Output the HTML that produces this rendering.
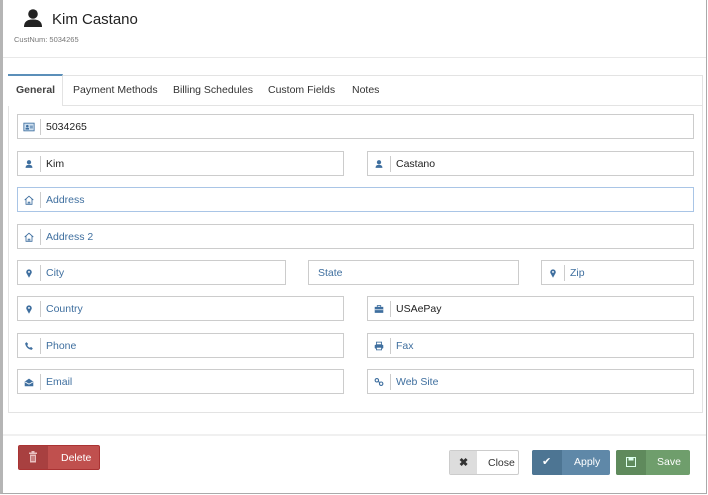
<!DOCTYPE html>
<html><head><style>
*{box-sizing:border-box}
body{margin:0;width:708px;height:495px;background:#fff;font-family:"Liberation Sans",sans-serif;position:relative;overflow:hidden}
.modal{position:absolute;left:0;top:0;width:707px;height:494px;border:1px solid #aaa;border-left:3px solid #b5b5b5;border-top:none;background:#fff}
.title{position:absolute;left:49px;top:11px;font-size:15px;color:#222}
.sub{position:absolute;left:11px;top:35px;font-size:7.5px;color:#777}
.hline{position:absolute;left:0;right:0;top:57px;border-top:1px solid #e8e8e8}
.panel{position:absolute;left:5px;top:75px;width:695px;height:338px;border:1px solid #e3e3e3}
.tabs{position:absolute;left:5px;top:75px;width:695px;height:31px;border-bottom:1px solid #e3e3e3;font-size:10.5px;color:#333}
.tab{position:absolute;top:9px}
.gen{position:absolute;left:0;top:-1px;width:55px;height:32px;background:#fff;border-top:2px solid #5b8fb9;border-right:1px solid #e3e3e3;font-weight:bold;color:#444;padding:8px 0 0 8px}
.in{position:absolute;height:25px;border:1px solid #ccc;background:#fff;font-size:10.5px;color:#3f6f9f}
.in.f{border-color:#a9c5e6}
.in .ic{position:absolute;left:5px;top:6px;width:12px;height:12px}
.in .d{position:absolute;left:22px;top:4px;height:16px;border-left:1px solid #ccc}
.in .t{position:absolute;left:28px;top:6px}
.in.v .t{color:#222}
.in.ni .t{left:9px}
.fline{position:absolute;left:0;right:0;top:434px;border-top:2px solid #f0f0f0}
.btn{position:absolute;height:25px;border-radius:2px;font-size:10.5px;color:#fff;overflow:hidden}
.btn .l{position:absolute;left:0;top:0;bottom:0;width:29px}
.btn .tx{position:absolute;top:6px}
</style></head><body><div class="modal">
<svg style="position:absolute;left:20px;top:9px" width="20" height="18" viewBox="0 0 20 18"><circle cx="10" cy="5" r="4.8" fill="#222"/><path d="M1 18 C1 12 5 10.5 10 10.5 S19 12 19 18Z" fill="#222"/></svg>
<div class="title">Kim Castano</div>
<div class="sub">CustNum: 5034265</div>
<div class="hline"></div>
<div class="panel"></div>
<div class="tabs"><div class="gen">General</div>
<span class="tab" style="left:65px">Payment Methods</span>
<span class="tab" style="left:165px">Billing Schedules</span>
<span class="tab" style="left:260px">Custom Fields</span>
<span class="tab" style="left:344px">Notes</span></div>

<div class="in v" style="left:14px;top:114px;width:677px"><svg class="ic" viewBox="0 0 14 14"><rect x="1" y="2.5" width="12" height="9" fill="#cfe0f0" stroke="#3f6f9f"/><circle cx="5" cy="6" r="1.5" fill="#3f6f9f"/><rect x="3" y="8" width="4" height="2" fill="#3f6f9f"/><rect x="8" y="5.5" width="3.5" height="1" fill="#3f6f9f"/><rect x="8" y="7.5" width="3.5" height="1" fill="#3f6f9f"/></svg><span class="d"></span><span class="t">5034265</span></div>

<div class="in v" style="left:14px;top:151px;width:327px"><svg class="ic" viewBox="0 0 14 14"><circle cx="7" cy="5" r="2.5" fill="#3f6f9f"/><path d="M3 11.5C3 8.5 5 8 7 8S11 8.5 11 11.5Z" fill="#3f6f9f"/></svg><span class="d"></span><span class="t">Kim</span></div>
<div class="in v" style="left:364px;top:151px;width:327px"><svg class="ic" viewBox="0 0 14 14"><circle cx="7" cy="5" r="2.5" fill="#3f6f9f"/><path d="M3 11.5C3 8.5 5 8 7 8S11 8.5 11 11.5Z" fill="#3f6f9f"/></svg><span class="d"></span><span class="t">Castano</span></div>

<div class="in f" style="left:14px;top:187px;width:677px"><svg class="ic" viewBox="0 0 14 14"><path d="M2 7L7 2.5L12 7M3.5 6V12H10.5V6M6 12V9.5H8V12" fill="none" stroke="#3f6f9f"/></svg><span class="d"></span><span class="t">Address</span></div>
<div class="in" style="left:14px;top:224px;width:677px"><svg class="ic" viewBox="0 0 14 14"><path d="M2 7L7 2.5L12 7M3.5 6V12H10.5V6M6 12V9.5H8V12" fill="none" stroke="#3f6f9f"/></svg><span class="d"></span><span class="t">Address 2</span></div>

<div class="in" style="left:14px;top:260px;width:269px"><svg class="ic" viewBox="0 0 14 14"><path d="M7 12.5L4.2 7.5A3.2 3.2 0 1 1 9.8 7.5Z" fill="#3f6f9f"/><circle cx="7" cy="5.7" r="1.1" fill="#fff"/></svg><span class="d"></span><span class="t">City</span></div>
<div class="in ni" style="left:305px;top:260px;width:211px"><span class="t">State</span></div>
<div class="in" style="left:538px;top:260px;width:153px"><svg class="ic" viewBox="0 0 14 14"><path d="M7 12.5L4.2 7.5A3.2 3.2 0 1 1 9.8 7.5Z" fill="#3f6f9f"/><circle cx="7" cy="5.7" r="1.1" fill="#fff"/></svg><span class="d"></span><span class="t">Zip</span></div>

<div class="in" style="left:14px;top:296px;width:327px"><svg class="ic" viewBox="0 0 14 14"><path d="M7 12.5L4.2 7.5A3.2 3.2 0 1 1 9.8 7.5Z" fill="#3f6f9f"/><circle cx="7" cy="5.7" r="1.1" fill="#fff"/></svg><span class="d"></span><span class="t">Country</span></div>
<div class="in v" style="left:364px;top:296px;width:327px"><svg class="ic" viewBox="0 0 14 14"><rect x="2" y="4.5" width="10" height="7" fill="#3f6f9f"/><rect x="5" y="3" width="4" height="2" fill="none" stroke="#3f6f9f"/><rect x="2" y="7.5" width="10" height="0.8" fill="#fff"/></svg><span class="d"></span><span class="t">USAePay</span></div>

<div class="in" style="left:14px;top:333px;width:327px"><svg class="ic" viewBox="0 0 14 14"><path d="M4 2.5L6 4.5L5 6C5.5 7.5 6.5 8.5 8 9L9.5 8L11.5 10L10 11.5C6 11 3 8 2.5 4Z" fill="#3f6f9f"/></svg><span class="d"></span><span class="t">Phone</span></div>
<div class="in" style="left:364px;top:333px;width:327px"><svg class="ic" viewBox="0 0 14 14"><rect x="4" y="2.5" width="6" height="3" fill="none" stroke="#3f6f9f"/><rect x="2" y="5.5" width="10" height="4.5" rx="1" fill="#3f6f9f"/><rect x="4" y="8.5" width="6" height="3" fill="#fff" stroke="#3f6f9f"/></svg><span class="d"></span><span class="t">Fax</span></div>

<div class="in" style="left:14px;top:369px;width:327px"><svg class="ic" viewBox="0 0 14 14"><path d="M2 6.5L7 3L12 6.5V12H2Z" fill="#3f6f9f"/><path d="M2.5 7L7 9.5L11.5 7" fill="none" stroke="#fff"/></svg><span class="d"></span><span class="t">Email</span></div>
<div class="in" style="left:364px;top:369px;width:327px"><svg class="ic" viewBox="0 0 14 14"><circle cx="4.5" cy="5" r="2" fill="none" stroke="#3f6f9f" stroke-width="1.3"/><circle cx="9.5" cy="9" r="2" fill="none" stroke="#3f6f9f" stroke-width="1.3"/><path d="M6 6.3L8 7.7" stroke="#3f6f9f" stroke-width="1.3"/></svg><span class="d"></span><span class="t">Web Site</span></div>

<div class="fline"></div>
<div class="btn" style="left:15px;top:445px;width:82px;background:#c0504e;border:1px solid #a33"><div class="l" style="background:#a84040"><svg style="position:absolute;left:9px;top:5px" width="10" height="12" viewBox="0 0 10 12"><rect x="1" y="1.5" width="8" height="1.5" fill="#e8c0c0"/><rect x="3.5" y="0" width="3" height="1.5" fill="#e8c0c0"/><rect x="2" y="3.5" width="6" height="8" fill="#e8c0c0"/><path d="M4 5V10M6 5V10" stroke="#a84040"/></svg></div><span class="tx" style="left:42px">Delete</span></div>

<div class="btn" style="left:446px;top:450px;width:70px;background:#fff;border:1px solid #ccc;color:#333"><div class="l" style="background:#ddd;width:27px"><span style="position:absolute;left:9px;top:5px;font-size:11px;font-weight:bold;color:#333">✖</span></div><span class="tx" style="left:38px;top:6px">Close</span></div>
<div class="btn" style="left:529px;top:450px;width:78px;background:#5f88a8"><div class="l" style="background:#4d7593;width:30px"><span style="position:absolute;left:10px;top:5px;font-size:11px">✔</span></div><span class="tx" style="left:42px">Apply</span></div>
<div class="btn" style="left:613px;top:450px;width:74px;background:#6f9e6c"><div class="l" style="background:#5f8a5c;width:30px"><svg style="position:absolute;left:10px;top:7px" width="10" height="10" viewBox="0 0 10 10"><rect x="0.5" y="0.5" width="9" height="9" fill="none" stroke="#dfe" /><rect x="2.5" y="0.5" width="5" height="3" fill="#dfe"/></svg></div><span class="tx" style="left:41px">Save</span></div>
</div></body></html>
